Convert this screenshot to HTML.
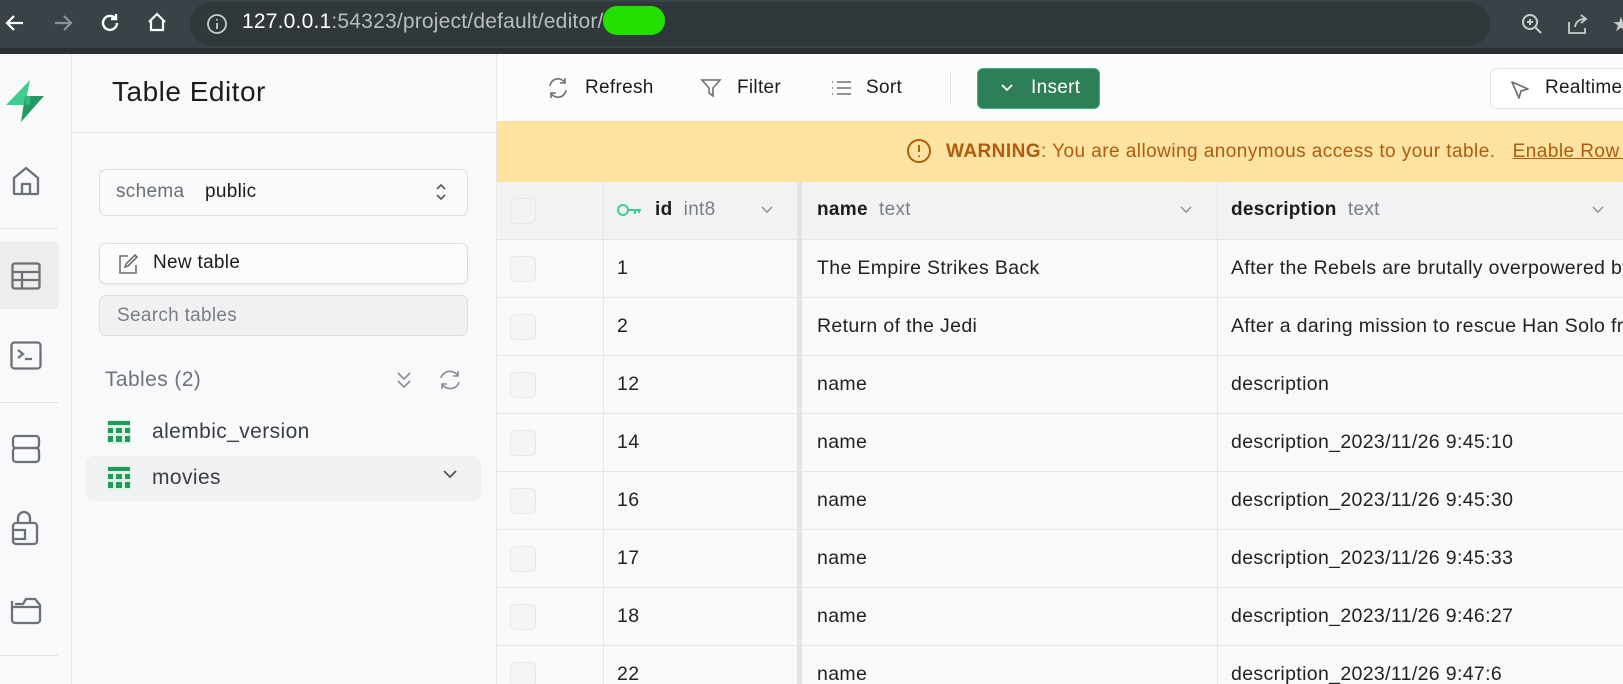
<!DOCTYPE html>
<html><head><meta charset="utf-8"><style>
*{box-sizing:border-box;margin:0;padding:0}
html,body{width:1623px;height:684px;overflow:hidden}
body{background:#f8f9fa;font-family:"Liberation Sans",sans-serif;position:relative;color:#1c1c1c}
#w{position:absolute;left:0;top:0;width:1623px;height:684px;overflow:hidden}
.a{position:absolute}
.t{font-size:19px;white-space:nowrap;letter-spacing:.3px}
.row{position:absolute;left:497px;width:1126px;height:58px;border-bottom:1px solid #e4e5e7;background:#f8f9fa;overflow:hidden}
.row div{position:absolute;top:0;height:57px;line-height:57px;font-size:19.5px;letter-spacing:.35px;color:#222;white-space:nowrap}
.cb{position:absolute;left:13px;top:16px;width:26px;height:26px;border:1px solid #e6e7e9;border-radius:5px;background:#f4f5f6}
.vl{position:absolute;top:182px;bottom:0;width:1px;background:#e4e5e7}
svg{position:absolute}
</style></head><body><div id="w">
<div class="a" style="left:0;top:0;width:1623px;height:48px;background:#394246"></div>
<div class="a" style="left:0;top:48px;width:1623px;height:6px;background:#2a3034"></div>
<div class="a" style="left:190px;top:2px;width:1300px;height:44px;border-radius:22px;background:#30383c"></div>
<svg style="left:4px;top:12px" width="22" height="22" viewBox="0 0 22 22" fill="none" stroke="#fff" stroke-width="2.2"><path d="M19 11H4M10 4l-7 7 7 7"/></svg>
<svg style="left:52px;top:12px" width="22" height="22" viewBox="0 0 22 22" fill="none" stroke="#8c9396" stroke-width="2.2"><path d="M3 11h15M12 4l7 7-7 7"/></svg>
<svg style="left:98px;top:11px" width="24" height="24" viewBox="0 0 24 24" fill="none" stroke="#fff" stroke-width="2.4"><path d="M19 12a7 7 0 1 1-2-5"/><path d="M18 3v5h-5" /></svg>
<svg style="left:145px;top:10px" width="24" height="24" viewBox="0 0 24 24" fill="none" stroke="#fff" stroke-width="2.2"><path d="M4 12L12 4l8 8M6 10v10h12V10"/></svg>
<svg style="left:206px;top:13px" width="22" height="22" viewBox="0 0 22 22" fill="none" stroke="#c8cccd" stroke-width="1.8"><circle cx="11" cy="11" r="9"/><path d="M11 10v6M11 6v1.5"/></svg>
<div class="a" style="left:242px;top:10px;font-size:21px;color:#fff;white-space:nowrap;letter-spacing:.2px">127.0.0.1<span style="color:#b8bdbf">:54323/project/default/editor/</span></div>
<div class="a" style="left:603px;top:6px;width:62px;height:29px;border-radius:14px;background:#22e100"></div>
<svg style="left:1520px;top:12px" width="24" height="24" viewBox="0 0 24 24" fill="none" stroke="#c8cccd" stroke-width="2"><circle cx="10" cy="10" r="7"/><path d="M15 15l6 6M10 7v6M7 10h6"/></svg>
<svg style="left:1566px;top:12px" width="24" height="24" viewBox="0 0 24 24" fill="none" stroke="#c8cccd" stroke-width="1.8"><path d="M3 10v11h16v-5M9 15c1-6 5-8 10-8M15 3l5 4-5 4"/></svg>
<div class="a" style="left:1612px;top:12px;color:#c8cccd;font-size:20px">★</div>

<div class="a" style="left:0;top:54px;width:72px;height:630px;background:#f8f9fa;border-right:1px solid #e6e7e9"></div>
<svg style="left:5px;top:80px" width="40" height="42" viewBox="0 0 40 42"><path d="M25 0L1 25h19z" fill="#3ecf8e"/><path d="M20 16h19L16 42z" fill="#249a63"/><path d="M20 16h5v9h-5z" fill="#2fb87b"/></svg>
<svg style="left:12px;top:166px" width="28" height="30" viewBox="0 0 28 30" fill="none" stroke="#6d7074" stroke-width="2.3" stroke-linejoin="round"><path d="M2 12L14 2l12 10v15a1 1 0 0 1-1 1H3a1 1 0 0 1-1-1z"/><path d="M10 28V18h8v10"/></svg>
<div class="a" style="left:0;top:228px;width:58px;height:1px;background:#e0e1e3"></div>
<div class="a" style="left:0;top:242px;width:59px;height:67px;background:#ededee;border-radius:0 6px 6px 0"></div>
<svg style="left:11px;top:262px" width="30" height="28" viewBox="0 0 30 28" fill="none" stroke="#6d7074" stroke-width="2.3"><rect x="1.5" y="1.5" width="27" height="25" rx="2"/><path d="M1.5 10h27M1.5 18h27M11 10v16.5"/></svg>
<svg style="left:10px;top:341px" width="32" height="30" viewBox="0 0 32 30" fill="none" stroke="#6d7074" stroke-width="2.3"><rect x="1.5" y="1.5" width="29" height="26" rx="3"/><path d="M8 9l5 4-5 4M15 18h7"/></svg>
<div class="a" style="left:0;top:402px;width:58px;height:1px;background:#e0e1e3"></div>
<svg style="left:11px;top:434px" width="30" height="30" viewBox="0 0 30 30" fill="none" stroke="#6d7074" stroke-width="2.3"><rect x="2" y="2" width="26" height="12" rx="3"/><rect x="2" y="14" width="26" height="14" rx="3"/></svg>
<svg style="left:11px;top:510px" width="30" height="36" viewBox="0 0 30 36" fill="none" stroke="#6d7074" stroke-width="2.3"><path d="M7 13V8a6 6 0 0 1 12 0v5"/><rect x="2" y="13" width="24" height="21" rx="3"/><path d="M2 20h12v9H2"/></svg>
<svg style="left:10px;top:593px" width="32" height="32" viewBox="0 0 32 32" fill="none" stroke="#6d7074" stroke-width="2.3" stroke-linejoin="round"><path d="M2 8v19a3 3 0 0 0 3 3h22a3 3 0 0 0 3-3V12l-5-6h-9l-3 5H5"/><path d="M2 14h28"/></svg>
<div class="a" style="left:0;top:655px;width:58px;height:1px;background:#e0e1e3"></div>

<div class="a" style="left:72px;top:54px;width:425px;height:630px;background:#f8f9fa;border-right:1px solid #e6e7e9"></div>
<div class="a" style="left:72px;top:132px;width:425px;height:1px;background:#e4e5e7"></div>
<div class="a" style="left:112px;top:76px;font-size:28px;letter-spacing:.5px;color:#1c1c1c">Table Editor</div>
<div class="a" style="left:99px;top:169px;width:369px;height:47px;border:1px solid #dcdde0;border-radius:7px;background:#f9fafb"></div>
<div class="a t" style="left:116px;top:181px;color:#6b6e72">schema</div>
<div class="a t" style="left:205px;top:181px;color:#1c1c1c">public</div>
<svg style="left:434px;top:181px" width="14" height="22" viewBox="0 0 14 22" fill="none" stroke="#555" stroke-width="1.6"><path d="M3 8l4-4 4 4M3 14l4 4 4-4"/></svg>
<div class="a" style="left:99px;top:243px;width:369px;height:41px;border:1px solid #dcdde0;border-radius:7px;background:#fcfcfd;box-shadow:0 1px 2px rgba(0,0,0,.06)"></div>
<svg style="left:117px;top:253px" width="22" height="22" viewBox="0 0 22 22" fill="none" stroke="#6d7074" stroke-width="1.6"><path d="M11 3H3v17h16v-8"/><path d="M18 2l2 2-9 9-3 1 1-3z"/></svg>
<div class="a t" style="left:153px;top:252px">New table</div>
<div class="a" style="left:99px;top:295px;width:369px;height:41px;border:1px solid #dcdde0;border-radius:7px;background:#f0f1f2"></div>
<div class="a t" style="left:117px;top:305px;color:#7a7d81">Search tables</div>
<div class="a" style="left:105px;top:368px;font-size:21px;letter-spacing:.4px;color:#707378">Tables (2)</div>
<svg style="left:395px;top:370px" width="18" height="20" viewBox="0 0 18 20" fill="none" stroke="#8a8d91" stroke-width="1.6"><path d="M3 3l6 6 6-6M3 11l6 6 6-6"/></svg>
<svg style="left:438px;top:369px" width="24" height="22" viewBox="0 0 24 22" fill="none" stroke="#8a8d91" stroke-width="1.6"><path d="M3 9a9 8 0 0 1 17-2M21 13a9 8 0 0 1-17 2"/><path d="M20 2v5h-5M4 20v-5h5"/></svg>
<svg style="left:106px;top:419px" width="26" height="26" viewBox="0 0 26 26"><rect x="1" y="1" width="24" height="24" rx="2" fill="#d9f3e4"/><rect x="2" y="2" width="22" height="4" fill="#1f9a5a"/><g fill="#1f9a5a"><rect x="2" y="9" width="5" height="5"/><rect x="10" y="9" width="6" height="5"/><rect x="19" y="9" width="5" height="5"/><rect x="2" y="17" width="5" height="6"/><rect x="10" y="17" width="6" height="6"/><rect x="19" y="17" width="5" height="6"/></g></svg>
<div class="a" style="left:152px;top:420px;font-size:21px;letter-spacing:.4px;color:#3a3d41">alembic_version</div>
<div class="a" style="left:86px;top:456px;width:395px;height:45px;border-radius:8px;background:#f0f1f2"></div>
<svg style="left:106px;top:465px" width="26" height="26" viewBox="0 0 26 26"><rect x="1" y="1" width="24" height="24" rx="2" fill="#d9f3e4"/><rect x="2" y="2" width="22" height="4" fill="#1f9a5a"/><g fill="#1f9a5a"><rect x="2" y="9" width="5" height="5"/><rect x="10" y="9" width="6" height="5"/><rect x="19" y="9" width="5" height="5"/><rect x="2" y="17" width="5" height="6"/><rect x="10" y="17" width="6" height="6"/><rect x="19" y="17" width="5" height="6"/></g></svg>
<div class="a" style="left:152px;top:466px;font-size:21px;letter-spacing:.4px;color:#3a3d41">movies</div>
<svg style="left:442px;top:468px" width="16" height="12" viewBox="0 0 16 12" fill="none" stroke="#555" stroke-width="1.8"><path d="M2 3l6 6 6-6"/></svg>

<div class="a" style="left:497px;top:54px;width:1126px;height:67px;background:#fcfcfd"></div>
<svg style="left:546px;top:76px" width="24" height="24" viewBox="0 0 24 24" fill="none" stroke="#6d7074" stroke-width="1.6"><path d="M4 10a8 8 0 0 1 15-3M20 14a8 8 0 0 1-15 3"/><path d="M19 2v5h-5M5 22v-5h5"/></svg>
<div class="a t" style="left:585px;top:77px">Refresh</div>
<svg style="left:700px;top:77px" width="22" height="22" viewBox="0 0 22 22" fill="none" stroke="#6d7074" stroke-width="1.6"><path d="M2 3h18l-7 8v8l-4-3v-5z"/></svg>
<div class="a t" style="left:737px;top:77px">Filter</div>
<svg style="left:830px;top:79px" width="22" height="18" viewBox="0 0 22 18" fill="none" stroke="#6d7074" stroke-width="1.5"><path d="M7 3h14M7 9h14M7 15h14M2 3h1M2 9h1M2 15h1"/></svg>
<div class="a t" style="left:866px;top:77px">Sort</div>
<div class="a" style="left:950px;top:71px;width:1px;height:33px;background:#e2e3e5"></div>
<div class="a" style="left:977px;top:68px;width:123px;height:41px;border-radius:6px;background:#2e7e58;border:1px solid #3bb57a"></div>
<svg style="left:1000px;top:82px" width="14" height="12" viewBox="0 0 14 12" fill="none" stroke="#fff" stroke-width="1.8"><path d="M2 3l5 5 5-5"/></svg>
<div class="a t" style="left:1031px;top:77px;color:#fff">Insert</div>
<div class="a" style="left:1490px;top:68px;width:150px;height:41px;border-radius:7px;background:#fff;border:1px solid #e0e1e3"></div>
<svg style="left:1509px;top:79px" width="22" height="22" viewBox="0 0 22 22" fill="none" stroke="#6d7074" stroke-width="1.7" stroke-linejoin="round"><path d="M3 3l16 7-7 2-2 7z"/></svg>
<div class="a t" style="left:1545px;top:77px">Realtime</div>

<div class="a" style="left:497px;top:121px;width:1126px;height:61px;background:#fde3a2"></div>
<svg style="left:906px;top:138px" width="26" height="26" viewBox="0 0 26 26" fill="none" stroke="#b35c0a" stroke-width="2"><circle cx="13" cy="13" r="11"/><path d="M13 7v7M13 17.5v1.5"/></svg>
<div class="a t" style="left:946px;top:141px;color:#b05b0d;letter-spacing:.45px"><b>WARNING</b>: You are allowing anonymous access to your table.&nbsp;&nbsp;&nbsp;<span style="text-decoration:underline">Enable Row Level</span></div>

<div class="a" style="left:497px;top:182px;width:1126px;height:58px;background:#f1f2f3;border-bottom:1px solid #e4e5e7"></div>
<div class="a" style="left:510px;top:198px;width:26px;height:26px;border:1px solid #e6e7e9;border-radius:5px;background:#f1f2f3"></div>
<svg style="left:617px;top:203px" width="26" height="14" viewBox="0 0 26 14" fill="none" stroke="#3ecf8e" stroke-width="2"><circle cx="6" cy="7" r="5"/><path d="M11 7h13M18 7v4M22 7v3"/></svg>
<div class="a t" style="left:655px;top:199px"><b>id</b>&nbsp;&nbsp;<span style="color:#7a7d81">int8</span></div>
<svg style="left:760px;top:205px" width="14" height="10" viewBox="0 0 14 10" fill="none" stroke="#8a8d91" stroke-width="1.4"><path d="M2 2l5 5 5-5"/></svg>
<div class="a t" style="left:817px;top:199px"><b>name</b>&nbsp;&nbsp;<span style="color:#7a7d81">text</span></div>
<svg style="left:1179px;top:205px" width="14" height="10" viewBox="0 0 14 10" fill="none" stroke="#8a8d91" stroke-width="1.4"><path d="M2 2l5 5 5-5"/></svg>
<div class="a t" style="left:1231px;top:199px"><b>description</b>&nbsp;&nbsp;<span style="color:#7a7d81">text</span></div>
<svg style="left:1591px;top:205px" width="14" height="10" viewBox="0 0 14 10" fill="none" stroke="#8a8d91" stroke-width="1.4"><path d="M2 2l5 5 5-5"/></svg>

<div class="row" style="top:240px"><span class="cb"></span><div style="left:120px">1</div><div style="left:320px">The Empire Strikes Back</div><div style="left:734px">After the Rebels are brutally overpowered by the Empire</div></div>
<div class="row" style="top:298px"><span class="cb"></span><div style="left:120px">2</div><div style="left:320px">Return of the Jedi</div><div style="left:734px">After a daring mission to rescue Han Solo from Jabba</div></div>
<div class="row" style="top:356px"><span class="cb"></span><div style="left:120px">12</div><div style="left:320px">name</div><div style="left:734px">description</div></div>
<div class="row" style="top:414px"><span class="cb"></span><div style="left:120px">14</div><div style="left:320px">name</div><div style="left:734px">description_2023/11/26 9:45:10</div></div>
<div class="row" style="top:472px"><span class="cb"></span><div style="left:120px">16</div><div style="left:320px">name</div><div style="left:734px">description_2023/11/26 9:45:30</div></div>
<div class="row" style="top:530px"><span class="cb"></span><div style="left:120px">17</div><div style="left:320px">name</div><div style="left:734px">description_2023/11/26 9:45:33</div></div>
<div class="row" style="top:588px"><span class="cb"></span><div style="left:120px">18</div><div style="left:320px">name</div><div style="left:734px">description_2023/11/26 9:46:27</div></div>
<div class="row" style="top:646px"><span class="cb"></span><div style="left:120px">22</div><div style="left:320px">name</div><div style="left:734px">description_2023/11/26 9:47:6</div></div>
<div class="vl" style="left:603px"></div>
<div class="a" style="left:797px;top:182px;width:5px;height:502px;background:#e2e3e5"></div>
<div class="vl" style="left:1217px"></div>
</div></body></html>
